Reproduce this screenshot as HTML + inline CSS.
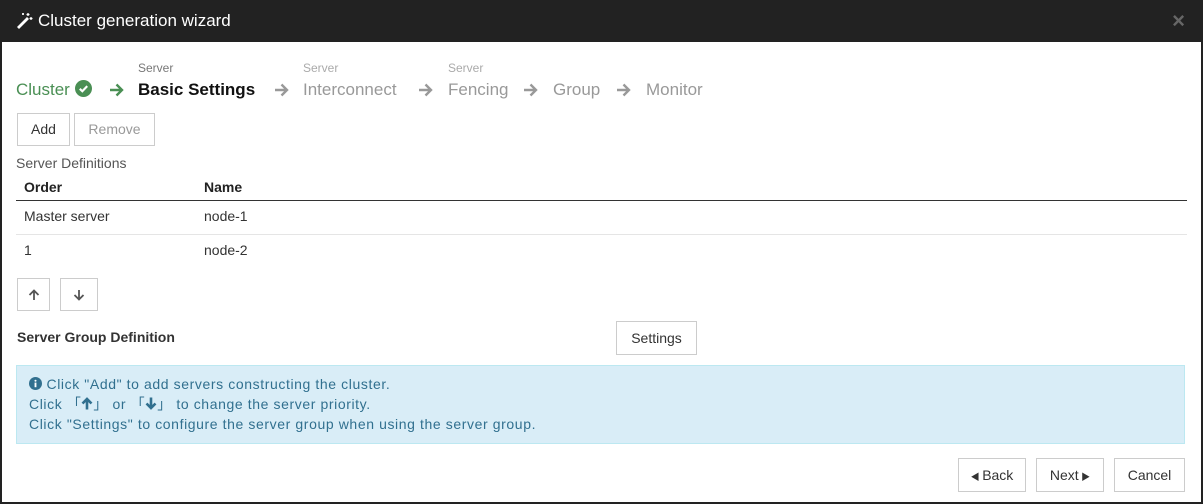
<!DOCTYPE html>
<html><head><meta charset="utf-8"><style>
*{box-sizing:border-box}
body{margin:0;width:1203px;height:504px;background:#222;font-family:"Liberation Sans","Noto Sans CJK JP",sans-serif;font-size:14px;color:#333;position:relative;overflow:hidden}
.title{position:absolute;left:0;top:0;width:1203px;height:42px;background:#222;color:#fff;font-size:17px;line-height:42px;padding-left:38px}
.x{position:absolute;right:18px;top:0;color:#666;font-size:22px;font-weight:bold}
.main{position:absolute;left:2px;top:42px;width:1199px;height:460px;background:#fff}
.a{position:absolute;white-space:nowrap}
.btn{position:absolute;border:1px solid #ccc;background:#fff;font-size:14px;text-align:center;color:#333}
.sm{font-size:12px;color:#999}
.step{font-size:17px;color:#999}
.ar{position:absolute;top:41px}
</style></head><body>
<div class="title"><svg style="position:absolute;left:15px;top:12px" width="18" height="18" viewBox="0 0 18 18"><path d="M2 15 L12 5 L14 7 L4 17 Z" fill="#fff"/><path d="M13 1v3M11.5 2.5h3M16 5v3M14.5 6.5h3M8 1v2M7 2h2" stroke="#fff" stroke-width="1.3"/></svg>Cluster generation wizard<span class="x">×</span></div>
<div class="main">
<div class="a sm" style="left:136px;top:19px;color:#777">Server</div>
<div class="a sm" style="left:301px;top:19px;color:#aaa">Server</div>
<div class="a sm" style="left:446px;top:19px;color:#aaa">Server</div>
<div class="a step" style="left:14px;top:38px;color:#4a8f54">Cluster <svg width="17" height="17" viewBox="0 0 16 16" style="vertical-align:-2px"><circle cx="8" cy="8" r="8" fill="#4a8f54"/><path d="M4.5 8.3l2.4 2.3 4.6-4.8" stroke="#fff" stroke-width="2" fill="none"/></svg></div>
<svg class="ar" style="left:107px" width="15" height="14" viewBox="0 0 15 14"><path d="M1 7h12M7.5 1.5L13 7l-5.5 5.5" stroke="#4a8f54" stroke-width="2.4" fill="none"/></svg>
<div class="a step" style="left:136px;top:38px;color:#111;font-weight:bold">Basic Settings</div>
<svg class="ar" style="left:272px" width="15" height="14" viewBox="0 0 15 14"><path d="M1 7h12M7.5 1.5L13 7l-5.5 5.5" stroke="#999" stroke-width="2.4" fill="none"/></svg>
<div class="a step" style="left:301px;top:38px">Interconnect</div>
<svg class="ar" style="left:416px" width="15" height="14" viewBox="0 0 15 14"><path d="M1 7h12M7.5 1.5L13 7l-5.5 5.5" stroke="#999" stroke-width="2.4" fill="none"/></svg>
<div class="a step" style="left:446px;top:38px">Fencing</div>
<svg class="ar" style="left:521px" width="15" height="14" viewBox="0 0 15 14"><path d="M1 7h12M7.5 1.5L13 7l-5.5 5.5" stroke="#999" stroke-width="2.4" fill="none"/></svg>
<div class="a step" style="left:551px;top:38px">Group</div>
<svg class="ar" style="left:614px" width="15" height="14" viewBox="0 0 15 14"><path d="M1 7h12M7.5 1.5L13 7l-5.5 5.5" stroke="#999" stroke-width="2.4" fill="none"/></svg>
<div class="a step" style="left:644px;top:38px">Monitor</div>
<div class="btn" style="left:15px;top:71px;width:53px;height:33px;line-height:31px">Add</div>
<div class="btn" style="left:72px;top:71px;width:81px;height:33px;line-height:31px;color:#999">Remove</div>
<div class="a" style="left:14px;top:113px;color:#555">Server Definitions</div>
<div class="a" style="left:22px;top:137px;font-weight:bold;color:#222">Order</div>
<div class="a" style="left:202px;top:137px;font-weight:bold;color:#222">Name</div>
<div class="a" style="left:14px;top:158px;width:1171px;border-top:1px solid #333"></div>
<div class="a" style="left:22px;top:166px">Master server</div>
<div class="a" style="left:202px;top:166px">node-1</div>
<div class="a" style="left:14px;top:192px;width:1171px;border-top:1px solid #e5e5e5"></div>
<div class="a" style="left:22px;top:200px">1</div>
<div class="a" style="left:202px;top:200px">node-2</div>
<div class="btn" style="left:15px;top:236px;width:33px;height:33px"><svg width="12" height="12" viewBox="0 0 12 12" style="margin-top:10px"><path d="M6 11V1.5M1.5 6L6 1.5 10.5 6" stroke="#555" stroke-width="1.8" fill="none"/></svg></div>
<div class="btn" style="left:58px;top:236px;width:38px;height:33px"><svg width="12" height="12" viewBox="0 0 12 12" style="margin-top:10px"><path d="M6 1v9.5M1.5 6L6 10.5 10.5 6" stroke="#555" stroke-width="1.8" fill="none"/></svg></div>
<div class="a" style="left:15px;top:287px;font-weight:bold;color:#333">Server Group Definition</div>
<div class="btn" style="left:614px;top:279px;width:81px;height:34px;line-height:32px">Settings</div>
<div class="a" style="left:14px;top:323px;width:1169px;height:79px;background:#d9edf7;border:1px solid #bce8f1;color:#31708f;padding:8px 0 0 12px;line-height:20px;letter-spacing:0.6px">
<svg width="13" height="13" viewBox="0 0 14 14" style="vertical-align:-1px"><circle cx="7" cy="7" r="7" fill="#31708f"/><rect x="6" y="6" width="2" height="5" fill="#fff"/><circle cx="7" cy="4" r="1.1" fill="#fff"/></svg> Click "Add" to add servers constructing the cluster.<br>Click 「<svg width="12" height="13" viewBox="0 0 12 13" style="vertical-align:-1px"><path d="M6 12.5V2M1.5 6.5L6 2l4.5 4.5" stroke="#31708f" stroke-width="2.6" fill="none"/></svg>」 or 「<svg width="12" height="13" viewBox="0 0 12 13" style="vertical-align:-1px"><path d="M6 0.5V11M1.5 6.5L6 11l4.5-4.5" stroke="#31708f" stroke-width="2.6" fill="none"/></svg>」 to change the server priority.<br>Click "Settings" to configure the server group when using the server group.</div>
<div class="btn" style="left:956px;top:416px;width:68px;height:34px;line-height:32px"><span style="font-size:9px">◀ </span>Back</div>
<div class="btn" style="left:1034px;top:416px;width:68px;height:34px;line-height:32px">Next<span style="font-size:9px"> ▶</span></div>
<div class="btn" style="left:1112px;top:416px;width:71px;height:34px;line-height:32px">Cancel</div>
</div>
</body></html>
